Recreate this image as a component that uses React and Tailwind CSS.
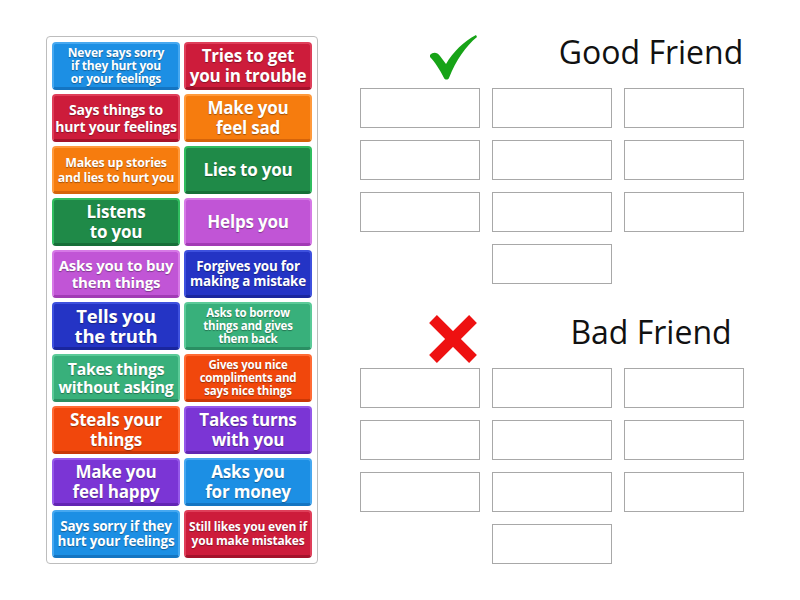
import React from 'react';

const colors = {
  blue: 'bg-[#1c8fe4] border-[#46a8f0] border-b-[#1475c2]',
  red: 'bg-[#cd1c3b] border-[#df3f5a] border-b-[#a5122b]',
  orange: 'bg-[#f67c0e] border-[#ff9a3c] border-b-[#d5640a]',
  green: 'bg-[#1f8a48] border-[#30bd5f] border-b-[#166f38]',
  magenta: 'bg-[#c155d6] border-[#d679e6] border-b-[#a23bb5]',
  darkblue: 'bg-[#2434c5] border-[#3e51de] border-b-[#1a269e]',
  teal: 'bg-[#38b07b] border-[#5bca98] border-b-[#2a8f63]',
  orangered: 'bg-[#f1470c] border-[#ff6b35] border-b-[#ca3806]',
  purple: 'bg-[#7b35d5] border-[#9558e9] border-b-[#6225b3]',
};

const tiles = [
  { lines: ['Never says sorry', 'if they hurt you', 'or your feelings'], color: 'blue', size: 'text-[12px] leading-[13px]' },
  { lines: ['Tries to get', 'you in trouble'], color: 'red', size: 'text-[17px] leading-[20px]' },
  { lines: ['Says things to', 'hurt your feelings'], color: 'red', size: 'text-[14px] leading-[17px]' },
  { lines: ['Make you', 'feel sad'], color: 'orange', size: 'text-[17px] leading-[20px]' },
  { lines: ['Makes up stories', 'and lies to hurt you'], color: 'orange', size: 'text-[12.4px] leading-[15px]' },
  { lines: ['Lies to you'], color: 'green', size: 'text-[17px] leading-[20px]' },
  { lines: ['Listens', 'to you'], color: 'green', size: 'text-[17px] leading-[20px]' },
  { lines: ['Helps you'], color: 'magenta', size: 'text-[17px] leading-[20px]' },
  { lines: ['Asks you to buy', 'them things'], color: 'magenta', size: 'text-[15px] leading-[17px]' },
  { lines: ['Forgives you for', 'making a mistake'], color: 'darkblue', size: 'text-[13.4px] leading-[15px]' },
  { lines: ['Tells you', 'the truth'], color: 'darkblue', size: 'text-[18.5px] leading-[20px]' },
  { lines: ['Asks to borrow', 'things and gives', 'them back'], color: 'teal', size: 'text-[11.5px] leading-[13px]' },
  { lines: ['Takes things', 'without asking'], color: 'teal', size: 'text-[15.8px] leading-[18px]' },
  { lines: ['Gives you nice', 'compliments and', 'says nice things'], color: 'orangered', size: 'text-[11.5px] leading-[13px]' },
  { lines: ['Steals your', 'things'], color: 'orangered', size: 'text-[17px] leading-[20px]' },
  { lines: ['Takes turns', 'with you'], color: 'purple', size: 'text-[17px] leading-[20px]' },
  { lines: ['Make you', 'feel happy'], color: 'purple', size: 'text-[17px] leading-[20px]' },
  { lines: ['Asks you', 'for money'], color: 'blue', size: 'text-[17px] leading-[20px]' },
  { lines: ['Says sorry if they', 'hurt your feelings'], color: 'blue', size: 'text-[13.5px] leading-[15px]' },
  { lines: ['Still likes you even if', 'you make mistakes'], color: 'red', size: 'text-[12px] leading-[14px]' },
];

const Tile = ({ tile }) => (
  <div
    className={`h-[48px] rounded-[4px] border-2 border-b-[3px] flex items-center justify-center text-center text-white font-bold tracking-[-0.2px] [text-shadow:0_1px_1px_rgba(0,0,0,0.35)] ${colors[tile.color]}`}
  >
    <div className={`${tile.size} whitespace-nowrap`}>
      {tile.lines.map((line, i) => (
        <div key={i}>{line}</div>
      ))}
    </div>
  </div>
);

const CheckIcon = () => (
  <svg width="48" height="46" viewBox="0 0 48 46">
    <path
      d="M1 21 C4 18 8 18 11 22 L17 30 C24 18 35 7 47 1 L48 3 C37 12 27 26 20 44 C19 46 16 46 15 44 C11 36 6 28 1 23 Z"
      fill="#17a317"
    />
  </svg>
);

const CrossIcon = () => (
  <svg width="50" height="50" viewBox="0 0 50 50">
    <line x1="5" y1="5" x2="45" y2="45" stroke="#ee1111" strokeWidth="11" />
    <line x1="45" y1="5" x2="5" y2="45" stroke="#ee1111" strokeWidth="11" />
  </svg>
);

const DropBox = () => (
  <div className="w-[120px] h-[40px] border border-[#a8a8a8] bg-white" />
);

const Group = ({ title, icon }) => (
  <div className="flex flex-col">
    <div className="h-[56px] flex">
      <div className="w-[186px] flex justify-center pt-0.5">{icon}</div>
      <div className="flex-1 pl-[12px] text-center text-[32px] leading-[40px] text-[#111] whitespace-nowrap">{title}</div>
    </div>
    <div className="grid grid-cols-[120px_120px_120px] gap-x-[12px] gap-y-[12px]">
      {Array.from({ length: 9 }).map((_, i) => (
        <DropBox key={i} />
      ))}
      <div />
      <DropBox />
    </div>
  </div>
);

export default function App() {
  return (
    <div className="w-[800px] h-[600px] bg-white flex items-start font-['Open_Sans',sans-serif]">
      <div className="ml-[46px] mt-[36px] w-[272px] border border-[#bdbdbd] rounded-[4px] p-[5px] grid grid-cols-2 gap-[4px]">
        {tiles.map((tile, i) => (
          <Tile key={i} tile={tile} />
        ))}
      </div>
      <div className="ml-[42px] mt-[32px] flex flex-col gap-[28px]">
        <Group title="Good Friend" icon={<CheckIcon />} />
        <Group title="Bad Friend" icon={<CrossIcon />} />
      </div>
    </div>
  );
}
